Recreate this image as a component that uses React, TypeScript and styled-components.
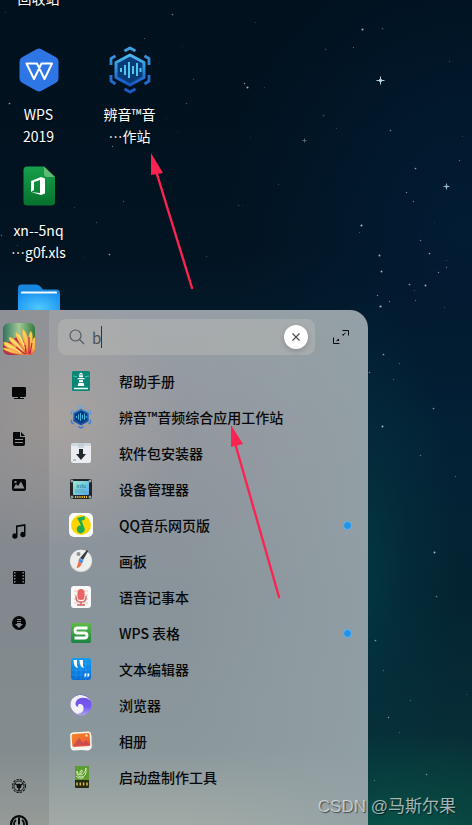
import React, { useState } from "react";
import styled, { createGlobalStyle } from "styled-components";

const GlobalStyle = createGlobalStyle`
  * { box-sizing: border-box; }
  body {
    margin: 0;
    font-family: "Noto Sans CJK SC", sans-serif;
    font-size: 14px;
    background: #01111f;
  }
  button { font: inherit; color: inherit; background: none; border: 0; padding: 0; cursor: pointer; }
`;

const Desktop = styled.main`
  position: relative;
  min-height: 100vh;
  overflow: hidden;
  background:
    radial-gradient(ellipse 200px 110px at 84% 102%, #07574d 0%, rgba(7, 80, 72, 0.5) 45%, transparent 100%),
    radial-gradient(ellipse 100px 280px at 76% 70%, #03373f 0%, rgba(3, 50, 62, 0.5) 50%, transparent 100%),
    radial-gradient(ellipse 240px 300px at 98% 28%, #021c34 0%, transparent 100%),
    linear-gradient(180deg, #01111e 0%, #021321 30%, #042337 52%, #042331 72%, #072d37 88%, #0a3a37 100%);
`;

const Sky = styled.svg`
  position: absolute;
  inset: 0;
  width: 100%;
  height: 100%;
  pointer-events: none;
`;

const Shortcuts = styled.section`
  position: relative;
  display: grid;
  grid-template-columns: 77px 105px;
  grid-template-rows: repeat(4, 104px);
  row-gap: 12px;
  margin-top: -72px;
`;

const Shortcut = styled.button<{ $column: number; $row: number }>`
  grid-column: ${(p) => p.$column};
  grid-row: ${(p) => p.$row};
  display: flex;
  flex-direction: column;
  align-items: center;
  justify-content: flex-start;
  gap: 7px;
  color: #fff;
  line-height: 22px;
  text-shadow: 0 1px 2px rgba(0, 0, 0, 0.7);
`;

const ShortcutIcon = styled.span`
  display: flex;
  align-items: center;
  justify-content: center;
  height: 52px;
`;

const ShortcutLine = styled.span`
  display: flex;
  height: 22px;
`;

const ShortcutLabel = styled.span`
  display: flex;
  flex-direction: column;
  align-items: center;
`;

const Launcher = styled.section`
  position: absolute;
  top: 310px;
  right: 104px;
  bottom: 0;
  left: 0;
  display: flex;
  overflow: hidden;
  border-top-right-radius: 18px;
  background:
    radial-gradient(ellipse 130px 130px at 15% 21%, rgba(169, 163, 160, 0.95) 0%, transparent 100%),
    linear-gradient(90deg, rgba(154, 163, 166, 0) 50%, rgba(146, 161, 166, 0.8) 100%),
    linear-gradient(180deg, #979ea6 0%, #92979e 25%, #89939a 55%, #8a979b 85%, #a2aaa6 100%);
`;

const Sidebar = styled.nav`
  flex: 0 0 49px;
  display: flex;
  flex-direction: column;
  padding-top: 13px;
  background: rgba(105, 100, 98, 0.22);
`;

const Avatar = styled.button`
  width: 32px;
  height: 32px;
  margin: 0 0 15px 3px;
  border-radius: 6px;
  overflow: hidden;
  svg { display: block; }
`;

const SideButton = styled.button<{ $height: number }>`
  display: flex;
  align-items: center;
  justify-content: center;
  width: 38px;
  height: ${(p) => p.$height}px;
`;

const SideFooter = styled.div`
  margin-top: auto;
  margin-bottom: -18px;
`;

const Content = styled.div`
  flex: 1;
  min-width: 0;
  padding: 9px 0 0 9px;
`;

const TopBar = styled.div`
  display: flex;
  align-items: center;
`;

const SearchBox = styled.label`
  flex: 1;
  min-width: 0;
  display: flex;
  align-items: center;
  height: 36px;
  padding: 0 7px 0 11px;
  border-radius: 8px;
  background: rgba(190, 190, 184, 0.42);
`;

const SearchInput = styled.input`
  field-sizing: content;
  min-width: 1px;
  max-width: 180px;
  margin-left: 7px;
  padding: 0;
  border: 0;
  outline: 0;
  background: transparent;
  color: #4c5159;
  caret-color: transparent;
  font: inherit;
  font-size: 15px;
`;

const Caret = styled.span`
  width: 1px;
  height: 22px;
  background: #30343a;
`;

const ClearButton = styled.button`
  display: flex;
  align-items: center;
  justify-content: center;
  width: 24px;
  height: 24px;
  margin-left: auto;
  border-radius: 50%;
  background: #fff;
  box-shadow: 0 2px 5px rgba(0, 0, 0, 0.18);
`;

const ExpandButton = styled.button`
  display: flex;
  align-items: center;
  justify-content: center;
  width: 53px;
  height: 36px;
  padding-right: 2px;
`;

const AppList = styled.ul`
  list-style: none;
  margin: 8px 0 0;
  padding: 0;
`;

const AppButton = styled.button`
  display: flex;
  align-items: center;
  width: 100%;
  height: 36px;
  padding: 0 16px 0 11px;
  color: #060809;
  font-weight: 500;
  text-align: left;
`;

const AppIcon = styled.span`
  display: flex;
  width: 24px;
  margin-right: 26px;
`;

const NewDot = styled.span`
  width: 9px;
  height: 9px;
  margin-left: auto;
  border: 1px solid #63b8f5;
  border-radius: 50%;
  background: #2492e6;
`;

const Watermark = styled.footer`
  position: absolute;
  right: 16px;
  bottom: 6px;
  color: rgba(226, 232, 232, 0.72);
  font-family: "Liberation Sans", "Noto Sans CJK SC", sans-serif;
  font-size: 17px;
  line-height: 24px;
  text-shadow: 1px 1px 1px rgba(0, 0, 0, 0.55);
`;

/* x, y, radius, opacity */
const stars: number[][] = [
  [172, 14, 1, 0.6], [144, 38, 0.7, 0.5], [182, 46, 0.7, 0.2], [193, 79, 0.8, 0.35], [186, 103, 0.8, 0.4],
  [9, 103, 1, 0.8], [5, 12, 0.8, 0.2], [177, 131, 0.8, 0.15], [112, 146, 0.8, 0.6], [166, 118, 0.7, 0.15],
  [74, 207, 0.7, 0.3], [96, 222, 0.8, 0.35], [123, 201, 0.8, 0.4], [109, 254, 1, 0.8], [84, 257, 0.7, 0.2],
  [1, 235, 0.9, 0.5], [17, 245, 0.7, 0.4], [255, 22, 0.7, 0.3], [362, 29, 1.2, 0.9], [382, 28, 1, 0.4],
  [325, 49, 0.9, 0.35], [353, 47, 0.7, 0.6], [449, 61, 0.8, 0.3], [244, 83, 0.8, 0.8], [247, 87, 1.2, 0.9],
  [264, 87, 0.6, 0.3], [323, 115, 1, 0.35], [336, 128, 0.7, 0.3], [390, 130, 1, 0.6], [250, 137, 0.7, 0.2],
  [462, 136, 0.7, 0.3], [459, 160, 0.9, 0.5], [415, 168, 1, 0.8], [278, 184, 0.8, 0.25], [406, 192, 0.8, 0.7],
  [413, 201, 0.8, 0.6], [238, 205, 0.9, 0.3], [242, 205, 0.7, 0.2], [434, 222, 0.7, 0.2], [361, 225, 1.2, 1],
  [359, 232, 0.7, 0.4], [420, 240, 0.9, 0.6], [429, 253, 1, 0.8], [379, 255, 1.1, 0.95], [206, 256, 0.8, 0.3],
  [446, 260, 0.7, 0.3], [446, 267, 0.8, 0.5], [381, 271, 1.1, 0.95], [438, 272, 0.8, 0.7], [409, 284, 1, 0.8],
  [425, 285, 1.1, 0.9], [414, 290, 0.7, 0.4], [377, 295, 0.8, 0.7], [415, 300, 0.8, 0.5], [389, 301, 0.8, 0.6],
  [380, 306, 1.3, 0.9], [444, 307, 0.8, 0.25], [383, 354, 1, 0.8], [399, 363, 0.8, 0.4], [369, 372, 0.9, 0.7],
  [393, 379, 0.8, 0.4], [382, 426, 1.1, 1], [433, 408, 1, 0.7], [420, 455, 0.9, 0.5], [455, 476, 0.8, 0.4],
  [434, 552, 1.1, 0.95], [436, 596, 1, 0.55], [375, 640, 1, 0.7], [383, 670, 0.8, 0.4], [466, 694, 0.8, 0.2],
  [410, 700, 0.8, 0.35], [388, 717, 0.9, 0.8], [399, 732, 0.8, 0.3], [426, 774, 0.9, 0.7], [374, 780, 0.7, 0.6],
];

const sparkles: number[][] = [[380.5, 80.5, 4, 0.9], [446.5, 186.5, 3, 0.75], [304.5, 140.5, 2, 0.4]];

function NightSky() {
  return (
    <Sky aria-hidden="true">
      {stars.map(([x, y, r, o], i) => (
        <circle key={i} cx={x + 0.5} cy={y + 0.5} r={r * 0.85} fill="#b9dbe8" opacity={o * 0.9} />
      ))}
      {sparkles.map(([x, y, r, o], i) => (
        <g key={i} opacity={o} stroke="#bfe3ee" fill="#d8f2fa">
          <path d={`M${x - r} ${y}H${x + r}M${x} ${y - r}V${y + r}`} strokeWidth="1" />
          <circle cx={x} cy={y} r={r / 3} />
        </g>
      ))}
    </Sky>
  );
}

function VoiceMark({ size, dark }: { size: number; dark?: boolean }) {
  const id = dark ? "voice-small" : "voice-large";
  return (
    <svg width={size} height={size} viewBox="0 0 48 48" fill="none">
      <defs>
        <linearGradient id={id} x1="0" y1="0" x2="0" y2="1">
          <stop offset="0" stopColor={dark ? "#2d7fd2" : "#4cb9ee"} />
          <stop offset="1" stopColor={dark ? "#1250ae" : "#1559c4"} />
        </linearGradient>
        <linearGradient id={`${id}-frame`} gradientUnits="userSpaceOnUse" x1="0" y1="2" x2="0" y2="46">
          <stop offset="0" stopColor={dark ? "#6ea6e6" : "#3ea2e4"} />
          <stop offset="1" stopColor={dark ? "#2c6fd6" : "#1b58c4"} />
        </linearGradient>
      </defs>
      <path d="M24 9 38 16.500v15L24 39 10 31.500v-15Z" fill="#063b78" stroke={`url(#${id})`} strokeWidth="3" strokeLinejoin="round" />
      <g stroke={`url(#${id}-frame)`} strokeWidth="2.800" strokeLinejoin="round">
        <path d="M18.500 5 24 2l5.500 3M18.500 43l5.500 3 5.500-3" />
        <path d="M9.500 10 5 12.500v6.500M38.500 10l4.500 2.500v6.500M5 29v6l4.500 3M43 29v6l-4.500 3" />
      </g>
      <g stroke={dark ? "#43b6e4" : "#55cdf3"} strokeWidth="1.900">
        <path d="M15 22v4M19 19v10M23 16v16M27 20v8M31 17v13M34.500 22v4" />
      </g>
    </svg>
  );
}

function WpsMark() {
  return (
    <svg width="40" height="44" viewBox="0 0 40 44">
      <path d="M17.500 1.200q2.500-1.400 5 0l14.500 8.100q2.500 1.400 2.500 4.200v17q0 2.800-2.500 4.200l-14.500 8.100q-2.500 1.400-5 0L3 34.700Q.500 33.300.500 30.500v-17Q.500 10.700 3 9.300Z" fill="#2e75e6" />
      <path d="M18 15.500H7.500L15 31l7.500-15.500H33L25.500 31Z" fill="none" stroke="#fff" strokeWidth="2" strokeLinejoin="round" />
    </svg>
  );
}

function SheetMark() {
  return (
    <svg width="34" height="40" viewBox="0 0 34 40">
      <defs>
        <linearGradient id="sheet" x1="0" y1="0" x2="0" y2="1">
          <stop offset="0" stopColor="#16a04c" /><stop offset="1" stopColor="#07712c" />
        </linearGradient>
      </defs>
      <path d="M5 .5h17L33 11v25q0 3.500-3.500 3.500H5Q1.500 39.500 1.500 36V4Q1.500.500 5 .5Z" fill="url(#sheet)" />
      <path d="M22 .5 33 11h-8q-3 0-3-3Z" fill="#5dbb72" />
      <path d="m9 15 10-4 4 1.500v15L19 29 9 26l9 1V14l-6 2v8l-3 2Z" fill="#fff" />
    </svg>
  );
}

function FolderMark() {
  return (
    <svg width="42" height="36" viewBox="0 0 42 36">
      <defs>
        <radialGradient id="folder" cx="0.5" cy="0.55" r="0.7">
          <stop offset="0" stopColor="#4ec8fd" /><stop offset="1" stopColor="#148cf0" />
        </radialGradient>
      </defs>
      <path d="M0 4q0-3.500 3.500-3.500H18q3 0 5 2.500l2 2.500h13q4 0 4 4V36H0Z" fill="#1587df" />
      <path d="M0 11q0-2 2-2h38q2 0 2 2v25H0Z" fill="url(#folder)" />
      <path d="M4 7.500h34q1 0 1 1v1H3v-1q0-1 1-1Z" fill="#eefaff" />
    </svg>
  );
}

function FlowerPicture() {
  return (
    <svg width="32" height="32" viewBox="0 0 32 32">
      <defs>
        <linearGradient id="leaf"><stop offset="0" stopColor="#2e7260" /><stop offset=".5" stopColor="#a3c896" /><stop offset="1" stopColor="#307a3e" /></linearGradient>
        <linearGradient id="petal" x1="0" y1="0" x2="0" y2="1"><stop offset="0" stopColor="#fbdf5c" /><stop offset=".6" stopColor="#fbb14b" /><stop offset="1" stopColor="#e85a45" /></linearGradient>
      </defs>
      <path d="M0 0h32v32H0Z" fill="url(#leaf)" />
      <path d="M0 22 14 14l18 10v8H0Z" fill="#b8324a" />
      <g fill="url(#petal)" stroke="#e9863a" strokeWidth=".4">
        <path d="M25 33Q-2 25 1 19q5-1 24 14Z" /><path d="M25 33Q4 19 6 14q6 0 19 19Z" />
        <path d="M25 33Q10 12 13 9q7 4 12 24Z" /><path d="M26 33Q17 11 20 6q7 6 6 27Z" />
        <path d="M26 33Q24 11 28 8q4 6-2 25Z" /><path d="M26 33Q28 17 32 14v19Z" />
        <path d="M25 33Q7 31 0 26q0-4 25 7Z" />
      </g>
      <path d="M9 17q8 6 12 13M16 12q4 7 6 14M4 22q8 3 14 8" stroke="#fff09a" strokeWidth="1" fill="none" />
      <path d="m22 22 1 9M26 14v17M29 20l-2 11M13 24l9 7" stroke="#c62342" strokeWidth="1.200" />
    </svg>
  );
}

const sideIcons: Record<string, React.ReactNode> = {
  计算机: <path d="M4 4h12a1 1 0 0 1 1 1v8a1 1 0 0 1-1 1H4a1 1 0 0 1-1-1V5a1 1 0 0 1 1-1ZM9 14h2v1h4v1H5v-1h4Z" />,
  文档: <path fillRule="evenodd" d="M5 3h6v5h5v7a2 2 0 0 1-2 2H6a2 2 0 0 1-2-2V4a1 1 0 0 1 1-1ZM12 3l4 4h-4ZM6 10v1h8v-1ZM6 13v1h8v-1Z" />,
  图片: <path fillRule="evenodd" d="M5 4h10a2 2 0 0 1 2 2v8a2 2 0 0 1-2 2H5a2 2 0 0 1-2-2V6a2 2 0 0 1 2-2ZM4.500 13.500h11l-3.500-7-3 4.500-2-2ZM5.500 6v2h2V6Z" />,
  音乐: <path fillRule="evenodd" d="M7 4.500 16.500 3v10.500a2.600 2.600 0 1 1-1.500-2.300V4.900L8.500 6v9a2.600 2.600 0 1 1-1.500-2.300Z" />,
  视频: <path fillRule="evenodd" d="M5 4h10a1 1 0 0 1 1 1v11a1 1 0 0 1-1 1H5a1 1 0 0 1-1-1V5a1 1 0 0 1 1-1ZM5 5v1.500h1.500V5ZM5 8v1.500h1.500V8ZM5 11v1.500h1.500V11ZM5 14v1.500h1.500V14ZM13.500 5v1.500H15V5ZM13.500 8v1.500H15V8ZM13.500 11v1.500H15V11ZM13.500 14v1.500H15V14Z" />,
  下载: <path fillRule="evenodd" d="M10 3a7 7 0 1 1 0 14 7 7 0 0 1 0-14ZM8 6v1h4V6ZM8 8v1h4V8ZM8 10v1H6l4 4 4-4h-2v-1Z" />,
};

function SettingsMark() {
  return (
    <svg width="20" height="20" viewBox="0 0 20 20" fill="none" stroke="#0b0d0e">
      <circle cx="10" cy="10" r="6.500" strokeWidth="1.100" strokeDasharray="2.400 1" />
      <circle cx="10" cy="10" r="5" strokeWidth="0.800" />
      <path d="M10 10v5M10 10 5.700 7.500M10 10l4.300-2.500" strokeWidth="1.400" />
      <path d="m10 7.500 2.300 1.300v2.600L10 12.700l-2.300-1.300V8.800Z" fill="#0b0d0e" stroke="none" />
    </svg>
  );
}

function PowerMark() {
  return (
    <svg width="20" height="20" viewBox="0 0 20 20" fill="none" stroke="#08090a">
      <circle cx="10" cy="10" r="7.900" strokeWidth="2.200" />
      <path d="M7 6a5 5 0 1 0 6 0" strokeWidth="1.800" />
      <path d="M10 3.500v7" strokeWidth="2" />
    </svg>
  );
}

const appIcons: Record<string, React.ReactNode> = {
  help: <><rect x="3" y="2" width="18" height="20" rx="1.500" fill="#088776" /><path d="M5 19.500h14" stroke="#eefdf9" strokeWidth="1.300" /><path d="M9.500 5.500h5L12 3.500ZM10 6.300h4v2h-4ZM8.500 9h7v1.200h-7ZM10 11h4v2h-4ZM9.500 13.800h5l.800 3.200H8.700Z" fill="#fff" /><path d="m4 7 4 .8M20 7l-4 .8" stroke="#6ec8bb" strokeWidth=".8" /></>,
  pack: <><rect x="2" y="2" width="20" height="20" rx="2.500" fill="#e9edf2" /><path d="M2 4q0-2 2-2h16q2 0 2 2v1H2Z" fill="#cfd7df" /><path d="M9 2h6v5H9Z" fill="#bfc9d1" opacity=".65" /><path d="M10 8h4v5h3l-5 6-5-6h3Z" fill="#24272a" /><path d="M4 19h3" stroke="#8d9299" /></>,
  device: <><rect x="1" y="2" width="22" height="20" rx="2" fill="#222526" /><g fill="#9ca2a4"><circle cx="3" cy="4" r="1.500" /><circle cx="21" cy="4" r="1.500" /><circle cx="3" cy="20" r="1.500" /><circle cx="21" cy="20" r="1.500" /></g><rect x="4" y="4" width="16" height="14" rx="1" fill="url(#device-screen)" /><text x="7.500" y="10.500" fontSize="6" fontFamily="Liberation Sans" fill="#21778f">info</text><path d="M6 13h9M6 15h12" stroke="#4799ae" strokeWidth=".7" /><path d="M6 20h12" stroke="#edc431" strokeWidth="2" strokeDasharray="1.200 1" /></>,
  music: <><rect width="24" height="24" rx="5" fill="#fcfdf9" /><circle cx="12" cy="12" r="10" fill="#ffd501" /><path d="m8 5 8-2-.500 4-3 .5 2.500 6.500a4 4 0 1 1-4.500-1.500h1.500L9 6.500Z" fill="#18ac59" /></>,
  paint: <><circle cx="12" cy="12" r="11.200" fill="#c8cccd" /><circle cx="12" cy="11.500" r="10.700" fill="#eeeeed" /><circle cx="9.500" cy="5" r="2" fill="#8a9093" /><path d="m18 1 1.200 1L14 11l-3-2Z" fill="#363c45" /><path d="m10.500 9 4 3-2 3-3-3Z" fill="#4b8edb" /><path d="m9.500 12 3 3q-1.500 4-5 4 1-2 2-7Z" fill="#ef6d41" /></>,
  voice: <><rect x="2" y="1" width="20" height="22" rx="3" fill="#f9f9f8" /><path d="M5 6h14M5 10h14M5 14h14M5 18h14" stroke="#eaa7a3" strokeWidth=".7" /><rect x="8.500" y="4" width="7" height="11" rx="3.500" fill="#e96563" /><path d="M7 11v2q0 4 5 4t5-4v-2M12 17v3M8 20h8" fill="none" stroke="#cd5f5f" strokeWidth="1.300" /></>,
  table: <><rect x="2" y="2" width="20" height="20" rx="2" fill="url(#table-green)" /><path d="M18.500 7H8.500Q6 7 6 9.500T8.500 12h7q2.500 0 2.500 2.500T15.500 17h-10" fill="none" stroke="#fff" strokeWidth="2.800" /></>,
  text: <><rect x="2" y="1" width="20" height="22" rx="3" fill="url(#text-blue)" /><path d="M7 2v20M12 2v20M17 2v20M3 7h18M3 13h18M3 18h18" stroke="#4cb4f3" strokeWidth=".3" /><path d="M4.500 3H8v5.500l1 2.500Q4.500 10 4.500 3ZM10.500 3H14v5.500l1 2.500q-4.500-1-4.500-8ZM15.500 16.500h2q0 3-2 4v-1.500ZM18.500 16.500h2q0 3-2 4v-1.500Z" fill="#fff" /></>,
  browser: <><circle cx="12" cy="12" r="10.500" fill="url(#browser-violet)" /><path d="M22 8Q17 1 10 2 1 4 1.500 13q1.500 6 7 8 7-1.500 6-7-1-3.500-4-3-2.500 1-1 3-3.500-1-3-4 1-4 5-5 6-1.500 10.500 3Z" fill="#f2f1f5" /></>,
  album: <><rect x="2" y="4" width="20" height="17" rx="3" fill="#fff" transform="rotate(5 12 12)" /><rect x="1.500" y="3" width="21" height="18" rx="3" fill="#f7f5f1" transform="rotate(-4 12 12)" /><rect x="3" y="4.500" width="18" height="13" rx="1.500" fill="url(#album-warm)" transform="rotate(-4 12 12)" /><path d="m4 17 6-8 4 5 3-3 4 5Z" fill="#b63f64" opacity=".65" /><circle cx="17.500" cy="6.500" r="1.200" fill="#ffe389" /></>,
  boot: <><path d="M6 1h14v14H6Z" fill="#5c9c31" /><path d="M6 15h14v7q0 1-1 1H7q-1 0-1-1Z" fill="#252b13" /><path d="M8 17.500v3M11.300 17.500v3M14.600 17.500v3M18 17.500v3" stroke="#ddc237" strokeWidth="1.500" /><path d="M17 3q1 9-5 9-5-1-4-6 0 4 4 4 4-1 5-7ZM13 5q-3 1-2 4 3-1 2-4ZM7 11q4 4 8 1" fill="none" stroke="#d2e7ad" strokeWidth="1" /></>,
};

function SmallIcon({ kind }: { kind: string }) {
  if (kind === "bianyin") return <VoiceMark size={24} dark />;
  return (
    <svg width="24" height="24" viewBox="0 0 24 24">
      <defs>
        <linearGradient id="device-screen" x1="0" y1="0" x2="1" y2="1"><stop stopColor="#9cebcd" /><stop offset="1" stopColor="#54a7ef" /></linearGradient>
        <linearGradient id="table-green" x1="0" y1="0" x2="0" y2="1"><stop stopColor="#61ba45" /><stop offset="1" stopColor="#188344" /></linearGradient>
        <linearGradient id="text-blue" x1="0" y1="0" x2="0" y2="1"><stop stopColor="#119df1" /><stop offset="1" stopColor="#086ed6" /></linearGradient>
        <linearGradient id="browser-violet" x1="0" y1="0" x2="0" y2="1"><stop stopColor="#6c50dd" /><stop offset=".6" stopColor="#7759f4" /><stop offset="1" stopColor="#aca5eb" /></linearGradient>
        <linearGradient id="album-warm" x1="0" y1="0" x2="1" y2="1"><stop stopColor="#f4882a" /><stop offset="1" stopColor="#ee5532" /></linearGradient>
      </defs>
      {appIcons[kind]}
    </svg>
  );
}

const apps = [
  { name: "帮助手册", icon: "help" },
  { name: "辨音™音频综合应用工作站", icon: "bianyin" },
  { name: "软件包安装器", icon: "pack" },
  { name: "设备管理器", icon: "device" },
  { name: "QQ音乐网页版", icon: "music", fresh: true },
  { name: "画板", icon: "paint" },
  { name: "语音记事本", icon: "voice" },
  { name: "WPS 表格", icon: "table", fresh: true },
  { name: "文本编辑器", icon: "text" },
  { name: "浏览器", icon: "browser" },
  { name: "相册", icon: "album" },
  { name: "启动盘制作工具", icon: "boot" },
];

const shortcuts = [
  { name: "回收站", lines: [["回收站"]], column: 1, row: 1, icon: null },
  { name: "WPS 2019", lines: [["WPS"], ["2019"]], column: 1, row: 2, icon: <WpsMark /> },
  { name: "辨音™音⋯作站", lines: [["辨音™音"], ["⋯", "作站"]], column: 2, row: 2, icon: <VoiceMark size={48} /> },
  { name: "xn--5nq⋯g0f.xls", lines: [["xn--5nq"], ["⋯", "g0f.xls"]], column: 1, row: 3, icon: <SheetMark /> },
  { name: "文件夹", lines: [], column: 1, row: 4, icon: <FolderMark /> },
];

export default function App() {
  const [query, setQuery] = useState("b");
  return (
    <>
      <GlobalStyle />
      <Desktop lang="zh-CN">
        <NightSky />
        <Shortcuts aria-label="桌面">
          {shortcuts.map((s) => (
            <Shortcut key={s.name} $column={s.column} $row={s.row} aria-label={s.name}>
              <ShortcutIcon>{s.icon}</ShortcutIcon>
              <ShortcutLabel>
                {s.lines.map((parts, i) => (
                  <ShortcutLine key={i}>
                    {parts.map((part) => <span key={part}>{part}</span>)}
                  </ShortcutLine>
                ))}
              </ShortcutLabel>
            </Shortcut>
          ))}
        </Shortcuts>
        <Launcher aria-label="启动器">
          <Sidebar>
            <Avatar aria-label="用户"><FlowerPicture /></Avatar>
            {Object.entries(sideIcons).map(([name, drawing]) => (
              <SideButton key={name} $height={46} aria-label={name}>
                <svg width="20" height="20" viewBox="0 0 20 20" fill="#060708">{drawing}</svg>
              </SideButton>
            ))}
            <SideFooter>
              <SideButton $height={38} aria-label="设置"><SettingsMark /></SideButton>
              <SideButton $height={38} aria-label="电源"><PowerMark /></SideButton>
            </SideFooter>
          </Sidebar>
          <Content>
            <TopBar>
              <SearchBox>
                <svg width="16" height="16" viewBox="0 0 16 16" fill="none" stroke="#555a62" strokeWidth="1.200">
                  <circle cx="6.500" cy="6.500" r="5.500" /><path d="m10.500 10.500 4.500 4.500" />
                </svg>
                <SearchInput aria-label="搜索" value={query} size={1} onChange={(e) => setQuery(e.target.value)} />
                <Caret />
                <ClearButton aria-label="清除" onClick={() => setQuery("")}>
                  <svg width="10" height="10" viewBox="0 0 10 10" stroke="#43484e" strokeWidth="1.100"><path d="m1.500 1.500 7 7M8.500 1.500l-7 7" /></svg>
                </ClearButton>
              </SearchBox>
              <ExpandButton aria-label="全屏">
                <svg width="16" height="16" viewBox="0 0 16 16" fill="none" stroke="#060708">
                  <path d="M9.500 1.500h6v5M.500 8.500v6h6M10 6l2.500-2M3.500 12 6 10" />
                  <path d="M9.500 5H11v1.500H9.500ZM4.500 10.500H6V12H4.500Z" fill="#060708" stroke="none" />
                </svg>
              </ExpandButton>
            </TopBar>
            <AppList>
              {apps.map((app) => (
                <li key={app.name}>
                  <AppButton>
                    <AppIcon><SmallIcon kind={app.icon} /></AppIcon>
                    {app.name}
                    {app.fresh && <NewDot />}
                  </AppButton>
                </li>
              ))}
            </AppList>
          </Content>
        </Launcher>
        <Sky aria-hidden="true">
          <g stroke="#fb2450" fill="#fb2450" strokeWidth="2.400" strokeLinecap="round">
            <path d="M156 171 192 288M235 443l44 154" />
            <path d="m151 153 12 20-12 2ZM231 425l12 19-12 3Z" stroke="none" />
          </g>
        </Sky>
        <Watermark>CSDN @马斯尔果</Watermark>
      </Desktop>
    </>
  );
}
